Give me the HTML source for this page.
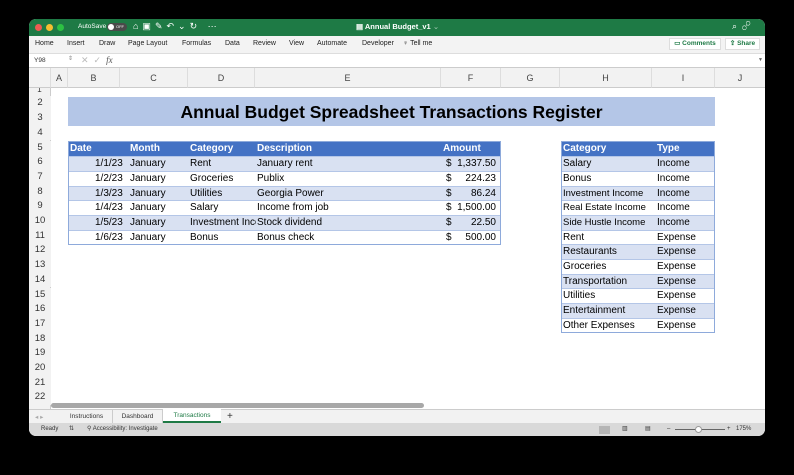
<!DOCTYPE html>
<html><head><meta charset="utf-8"><style>
*{margin:0;padding:0;box-sizing:border-box}
body{width:794px;height:475px;background:#000;position:relative;overflow:hidden;font-family:"Liberation Sans",sans-serif}
.a{position:absolute}
.win{left:29px;top:19px;width:736px;height:417px;background:#fff;border-radius:7px;overflow:hidden}
.tb{left:0;top:0;width:736px;height:17px;background:#1e7a45;color:#fff;font-size:7px}
.rib{left:0;top:17px;width:736px;height:17px;background:#f3f3f3;font-size:7px;color:#222}
.fb{left:0;top:34px;width:736px;height:15px;background:#fff;border-top:1px solid #ddd;border-bottom:1px solid #ccc;font-size:6.5px;color:#333}
.ch{top:49px;height:20px;background:#f2f2f2;border-bottom:1px solid #ccc;font-size:9px;color:#444;text-align:center;line-height:20px;border-right:1px solid #ddd}
.rh{left:0;width:22px;background:#f2f2f2;font-size:9.5px;color:#333;text-align:center;height:14.7px;line-height:14.7px}
.t{font-size:10px;color:#000;height:14.7px;line-height:14.7px;white-space:nowrap}
.hd{background:#4472c4;color:#fff;font-weight:bold}
.b1{background:#d9e1f2;border-top:1px solid #b4c6e7}
.w1{background:#fff;border-top:1px solid #b4c6e7}
.c{position:absolute;top:0}
</style></head><body>
<div class="a win">
 <div class="a tb">
  <div class="a" style="left:6px;top:5px;width:7px;height:7px;border-radius:50%;background:#ee5b52"></div>
  <div class="a" style="left:17px;top:5px;width:7px;height:7px;border-radius:50%;background:#f5be30"></div>
  <div class="a" style="left:28px;top:5px;width:7px;height:7px;border-radius:50%;background:#2dc143"></div>
  <div class="a" style="left:49px;top:4px;font-size:6.5px">AutoSave</div>
  <div class="a" style="left:78px;top:4px;width:20px;height:8px;border-radius:4px;background:#4a4a4a;font-size:4px;line-height:8px;padding-left:9px">OFF<div class="a" style="left:1px;top:1px;width:6px;height:6px;border-radius:50%;background:#fff"></div></div>
  <div class="a" style="left:104px;top:2px;font-size:9px;letter-spacing:4px">⌂▣✎↶⌄↻ ⋯</div>
  <div class="a" style="left:327px;top:3px;font-size:7.5px;font-weight:bold">▤ Annual Budget_v1 <span style="font-weight:normal;opacity:.6">⌄</span></div>
  <div class="a" style="left:703px;top:2px;font-size:9px">⌕ &nbsp;☍</div>
 </div>
 <div class="a rib">
  <div class="a" style="left:6px;top:4px">Home</div>
  <div class="a" style="left:38px;top:4px">Insert</div>
  <div class="a" style="left:70px;top:4px">Draw</div>
  <div class="a" style="left:99px;top:4px">Page Layout</div>
  <div class="a" style="left:153px;top:4px">Formulas</div>
  <div class="a" style="left:196px;top:4px">Data</div>
  <div class="a" style="left:224px;top:4px">Review</div>
  <div class="a" style="left:260px;top:4px">View</div>
  <div class="a" style="left:288px;top:4px">Automate</div>
  <div class="a" style="left:333px;top:4px">Developer</div>
  <div class="a" style="left:374px;top:4px">♀ Tell me</div>
  <div class="a" style="left:640px;top:2px;width:52px;height:12px;border:1px solid #ddd;background:#fff;color:#1e7a45;font-size:6.5px;line-height:10px;text-align:center;font-weight:bold">▭ Comments</div>
  <div class="a" style="left:696px;top:2px;width:35px;height:12px;border:1px solid #ddd;background:#fff;color:#1e7a45;font-size:6.5px;line-height:10px;text-align:center;font-weight:bold">⇪ Share</div>
 </div>
 <div class="a fb">
  <div class="a" style="left:5px;top:3px">Y98</div>
  <div class="a" style="left:39px;top:1px;font-size:6px;color:#888">⇕</div>
  <div class="a" style="left:52px;top:1px;font-size:9px;color:#bbb">✕ &nbsp;✓ &nbsp;<i style="color:#555;font-family:'Liberation Serif'">fx</i></div>
  <div class="a" style="left:729px;top:3px;font-size:5px;color:#666">▼</div>
 </div>
 <div class="a ch" style="left:0;width:22px"></div>
 <div class="a ch" style="left:22px;width:17px">A</div>
 <div class="a ch" style="left:39px;width:52px">B</div>
 <div class="a ch" style="left:91px;width:68px">C</div>
 <div class="a ch" style="left:159px;width:67px">D</div>
 <div class="a ch" style="left:226px;width:186px">E</div>
 <div class="a ch" style="left:412px;width:60px">F</div>
 <div class="a ch" style="left:472px;width:59px">G</div>
 <div class="a ch" style="left:531px;width:92px">H</div>
 <div class="a ch" style="left:623px;width:63px">I</div>
 <div class="a ch" style="left:686px;width:50px;border-right:0">J</div>
 <div class="a" style="left:0;top:69px;width:22px;height:322px;background:#f2f2f2;border-right:1px solid #ccc"></div>
 <div class="a rh" style="top:77.4px">2</div><div class="a rh" style="top:92.1px">3</div><div class="a rh" style="top:106.8px">4</div>
 <div class="a rh" style="top:121.5px">5</div><div class="a rh" style="top:136.2px">6</div><div class="a rh" style="top:150.9px">7</div>
 <div class="a rh" style="top:165.6px">8</div><div class="a rh" style="top:180.3px">9</div><div class="a rh" style="top:195px">10</div>
 <div class="a rh" style="top:209.7px">11</div><div class="a rh" style="top:224.4px">12</div><div class="a rh" style="top:239.1px">13</div>
 <div class="a rh" style="top:253.8px">14</div><div class="a rh" style="top:268.5px">15</div><div class="a rh" style="top:283.2px">16</div>
 <div class="a rh" style="top:297.9px">17</div><div class="a rh" style="top:312.6px">18</div><div class="a rh" style="top:327.3px">19</div>
 <div class="a rh" style="top:342px">20</div><div class="a rh" style="top:356.7px">21</div><div class="a rh" style="top:371.4px">22</div>
 <div class="a" style="left:0;top:69px;width:22px;height:8px;background:#f2f2f2;border-right:1px solid #ccc;overflow:hidden"><div style="font-size:8px;text-align:center;color:#333;line-height:6px;margin-top:-1px">1</div></div>

 <div class="a" style="left:39px;top:77.5px;width:647px;height:29.5px;background:#b4c6e7;text-align:center;font-size:17.5px;font-weight:bold;line-height:30px;color:#000">Annual Budget Spreadsheet Transactions Register</div>

 <div class="a" style="left:39px;top:121.5px;width:433px;border:1px solid #8eaadb">
  <div class="t hd" style="position:relative">
   <span class="c" style="left:1px">Date</span><span class="c" style="left:61px">Month</span><span class="c" style="left:121px">Category</span><span class="c" style="left:188px">Description</span><span class="c" style="left:374px">Amount</span></div>
  <div class="t b1" style="position:relative"><span class="c" style="left:26px">1/1/23</span><span class="c" style="left:61px">January</span><span class="c" style="left:121px">Rent</span><span class="c" style="left:188px">January rent</span><span class="c" style="left:377px">$</span><span class="c" style="right:4px">1,337.50</span></div>
  <div class="t w1" style="position:relative"><span class="c" style="left:26px">1/2/23</span><span class="c" style="left:61px">January</span><span class="c" style="left:121px">Groceries</span><span class="c" style="left:188px">Publix</span><span class="c" style="left:377px">$</span><span class="c" style="right:4px">224.23</span></div>
  <div class="t b1" style="position:relative"><span class="c" style="left:26px">1/3/23</span><span class="c" style="left:61px">January</span><span class="c" style="left:121px">Utilities</span><span class="c" style="left:188px">Georgia Power</span><span class="c" style="left:377px">$</span><span class="c" style="right:4px">86.24</span></div>
  <div class="t w1" style="position:relative"><span class="c" style="left:26px">1/4/23</span><span class="c" style="left:61px">January</span><span class="c" style="left:121px">Salary</span><span class="c" style="left:188px">Income from job</span><span class="c" style="left:377px">$</span><span class="c" style="right:4px">1,500.00</span></div>
  <div class="t b1" style="position:relative"><span class="c" style="left:26px">1/5/23</span><span class="c" style="left:61px">January</span><span class="c" style="left:121px;width:66px;overflow:hidden">Investment Income</span><span class="c" style="left:188px">Stock dividend</span><span class="c" style="left:377px">$</span><span class="c" style="right:4px">22.50</span></div>
  <div class="t w1" style="position:relative"><span class="c" style="left:26px">1/6/23</span><span class="c" style="left:61px">January</span><span class="c" style="left:121px">Bonus</span><span class="c" style="left:188px">Bonus check</span><span class="c" style="left:377px">$</span><span class="c" style="right:4px">500.00</span></div>
 </div>

 <div class="a" style="left:532px;top:121.5px;width:154px;border:1px solid #8eaadb">
  <div class="t hd" style="position:relative"><span class="c" style="left:1px">Category</span><span class="c" style="left:95px">Type</span></div>
  <div class="t b1" style="position:relative"><span class="c" style="left:1px">Salary</span><span class="c" style="left:95px">Income</span></div>
  <div class="t w1" style="position:relative"><span class="c" style="left:1px">Bonus</span><span class="c" style="left:95px">Income</span></div>
  <div class="t b1" style="position:relative"><span class="c" style="left:1px;font-size:9.5px">Investment Income</span><span class="c" style="left:95px">Income</span></div>
  <div class="t w1" style="position:relative"><span class="c" style="left:1px;font-size:9.5px">Real Estate Income</span><span class="c" style="left:95px">Income</span></div>
  <div class="t b1" style="position:relative"><span class="c" style="left:1px;font-size:9.5px">Side Hustle Income</span><span class="c" style="left:95px">Income</span></div>
  <div class="t w1" style="position:relative"><span class="c" style="left:1px">Rent</span><span class="c" style="left:95px">Expense</span></div>
  <div class="t b1" style="position:relative"><span class="c" style="left:1px">Restaurants</span><span class="c" style="left:95px">Expense</span></div>
  <div class="t w1" style="position:relative"><span class="c" style="left:1px">Groceries</span><span class="c" style="left:95px">Expense</span></div>
  <div class="t b1" style="position:relative"><span class="c" style="left:1px">Transportation</span><span class="c" style="left:95px">Expense</span></div>
  <div class="t w1" style="position:relative"><span class="c" style="left:1px">Utilities</span><span class="c" style="left:95px">Expense</span></div>
  <div class="t b1" style="position:relative"><span class="c" style="left:1px">Entertainment</span><span class="c" style="left:95px">Expense</span></div>
  <div class="t w1" style="position:relative"><span class="c" style="left:1px">Other Expenses</span><span class="c" style="left:95px">Expense</span></div>
 </div>

 <div class="a" style="left:22px;top:384px;width:373px;height:5px;border-radius:3px;background:#a8a8a8"></div>
 <div class="a" style="left:0;top:390px;width:736px;height:14px;background:#f2f2f2;border-top:1px solid #ccc;font-size:6.5px;color:#333">
  <div class="a" style="left:6px;top:3px;color:#aaa">◂ ▸</div>
  <div class="a" style="left:32px;top:0;width:52px;height:13px;line-height:13px;text-align:center;border-right:1px solid #ccc">Instructions</div>
  <div class="a" style="left:84px;top:0;width:50px;height:13px;line-height:13px;text-align:center;border-right:1px solid #ccc">Dashboard</div>
  <div class="a" style="left:134px;top:-1px;width:58px;height:14px;line-height:14px;text-align:center;background:#fff;color:#1e7a45;border-bottom:2px solid #1e7a45">Transactions</div>
  <div class="a" style="left:198px;top:0;font-size:10px;line-height:13px">+</div>
 </div>
 <div class="a" style="left:0;top:404px;width:736px;height:13px;background:#d9d9d9;font-size:6px;color:#333;line-height:13px">
  <span class="a" style="left:12px">Ready</span>
  <span class="a" style="left:40px">⇅</span>
  <span class="a" style="left:58px">⚲ Accessibility: Investigate</span>
  <span class="a" style="left:570px;top:3px;width:11px;height:8px;background:#b5b5b5"></span>
  <span class="a" style="left:593px">▥</span><span class="a" style="left:616px">▤</span>
  <span class="a" style="left:638px">–</span>
  <span class="a" style="left:646px;top:6px;width:50px;height:1px;background:#666"></span>
  <span class="a" style="left:666px;top:3px;width:7px;height:7px;border-radius:50%;background:#fff;border:1px solid #999"></span>
  <span class="a" style="left:698px">+</span>
  <span class="a" style="left:707px">175%</span>
 </div>
</div>
</body></html>
